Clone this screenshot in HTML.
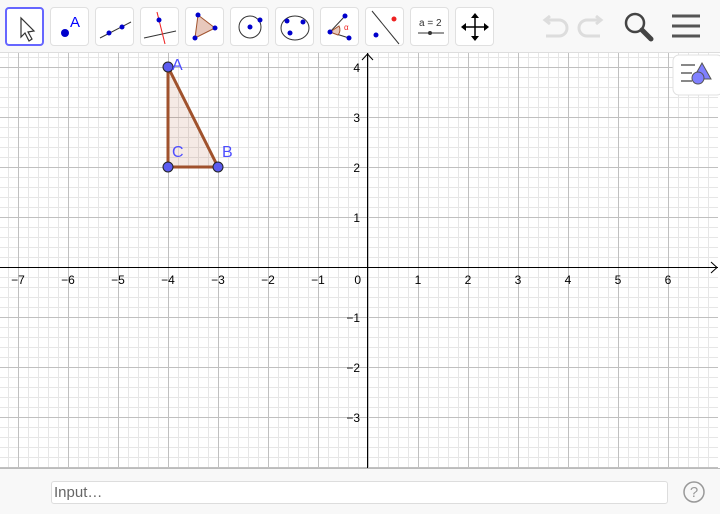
<!DOCTYPE html>
<html><head><meta charset="utf-8"><style>
*{margin:0;padding:0;box-sizing:border-box}
body{width:720px;height:514px;overflow:hidden;background:#fff;font-family:"Liberation Sans",sans-serif;position:relative}
#tb{position:absolute;left:0;top:0;width:720px;height:53px;background:#f8f8f8;border-bottom:1px solid #ddd}
.b{position:absolute;top:7px;width:39px;height:39px;background:#fff;border:1px solid #e0e0e0;border-radius:4px}
.b svg{position:absolute;left:0;top:0}
#g{position:absolute;left:0;top:53px}
#inp{position:absolute;left:0;top:468px;width:720px;height:46px;background:#f8f8f8;border-top:1px solid #bbb}
#box{position:absolute;left:51px;top:12px;width:617px;height:23px;background:#fff;border:1px solid #ddd;border-radius:3px;font-size:15px;color:#666;padding:2px 2px;font-family:"Liberation Sans Narrow","Liberation Sans",sans-serif}
</style></head><body>
<svg id="g" width="720" height="415" viewBox="0 53 720 415">
<defs>
<pattern id="mi" x="8" y="7" width="10" height="10" patternUnits="userSpaceOnUse"><path d="M0.5 0V10M0 0.5H10" stroke="#e6e6e6" stroke-width="1"/></pattern>
<pattern id="ma" x="18" y="17" width="50" height="50" patternUnits="userSpaceOnUse"><path d="M0.5 0V50M0 0.5H50" stroke="#c0c0c0" stroke-width="1"/></pattern>
</defs>
<rect x="0" y="53" width="718" height="415" fill="url(#mi)"/>
<rect x="0" y="53" width="718" height="415" fill="url(#ma)"/>
<line x1="0" y1="267.5" x2="718" y2="267.5" stroke="#000"/>
<line x1="367.5" y1="53" x2="367.5" y2="468" stroke="#000"/>
<path d="M711 262L717 267.5L711 273M362 60L367.5 54L373 60" fill="none" stroke="#000"/>
<g font-size="12" fill="#000" text-anchor="middle">
<text x="18" y="284">−7</text><text x="68" y="284">−6</text><text x="118" y="284">−5</text><text x="168" y="284">−4</text><text x="218" y="284">−3</text><text x="268" y="284">−2</text><text x="318" y="284">−1</text>
<text x="418" y="284">1</text><text x="468" y="284">2</text><text x="518" y="284">3</text><text x="568" y="284">4</text><text x="618" y="284">5</text><text x="668" y="284">6</text>
</g>
<g font-size="12" text-anchor="end">
<text x="361" y="284">0</text>
<text x="360" y="72">4</text><text x="360" y="122">3</text><text x="360" y="172">2</text><text x="360" y="222">1</text>
<text x="360" y="322">−1</text><text x="360" y="372">−2</text><text x="360" y="422">−3</text>
</g>
<polygon points="168,67 218,167 168,167" fill="rgba(153,51,0,0.1)" stroke="#a0522d" stroke-width="3" stroke-linejoin="round"/>
<g fill="#5c5cf0" stroke="#222" stroke-width="1">
<circle cx="168" cy="67" r="5"/><circle cx="218" cy="167" r="5"/><circle cx="168" cy="167" r="5"/>
</g>
<g fill="#4d4dff" font-size="16"><text x="172" y="70">A</text><text x="222" y="157">B</text><text x="172" y="157">C</text></g>
<rect x="673" y="55" width="50" height="40" rx="6" fill="#fff" stroke="#e0e0e0"/>
<path d="M681 65h14M681 73h11M681 81h11" stroke="#888" stroke-width="2"/>
<polygon points="702,63 711,79 693,79" fill="#8080ff" stroke="#555"/>
<circle cx="698" cy="78" r="6" fill="#8080ff" stroke="#555"/>
</svg>
<div id="tb">
<div class="b" style="left:5px;border:2px solid #6666ff"><svg width="38" height="38"><path d="M14 9L14 28L18 24L22 32L25 30L21 23L27 22Z" fill="#fff" stroke="#333" stroke-width="1.2"/></svg></div>
<div class="b" style="left:50px"><svg width="40" height="40"><circle cx="14" cy="25" r="4" fill="#00c"/><text x="19" y="19" font-size="15" fill="#00f">A</text></svg></div>
<div class="b" style="left:95px"><svg width="40" height="40"><line x1="4" y1="30" x2="35" y2="14" stroke="#333"/><circle cx="13" cy="25" r="2.5" fill="#00c"/><circle cx="26" cy="19" r="2.5" fill="#00c"/></svg></div>
<div class="b" style="left:140px"><svg width="40" height="40"><line x1="3" y1="30" x2="35" y2="23" stroke="#333"/><line x1="16" y1="4" x2="24" y2="36" stroke="#e22"/><circle cx="18" cy="12" r="2.5" fill="#00c"/></svg></div>
<div class="b" style="left:185px"><svg width="40" height="40"><polygon points="12,7 29,20 9,30" fill="#e8c8bc" stroke="#a0522d"/><circle cx="12" cy="7" r="2.5" fill="#00c"/><circle cx="29" cy="20" r="2.5" fill="#00c"/><circle cx="9" cy="30" r="2.5" fill="#00c"/></svg></div>
<div class="b" style="left:230px"><svg width="40" height="40"><circle cx="19" cy="19" r="11" fill="none" stroke="#333"/><circle cx="19" cy="19" r="2.5" fill="#00c"/><circle cx="29" cy="12" r="2.5" fill="#00c"/></svg></div>
<div class="b" style="left:275px"><svg width="40" height="40"><ellipse cx="19" cy="20" rx="14" ry="12" fill="none" stroke="#333"/><circle cx="11" cy="13" r="2.5" fill="#00c"/><circle cx="27" cy="14" r="2.5" fill="#00c"/><circle cx="14" cy="25" r="2.5" fill="#00c"/></svg></div>
<div class="b" style="left:320px"><svg width="40" height="40"><path d="M24 8L9 24L28 30" fill="none" stroke="#333"/><path d="M9 24L18 18A8 8 0 0 1 17 27Z" fill="#e8c8bc" stroke="#a0522d"/><text x="23" y="22" font-size="8" fill="#e22">α</text><circle cx="24" cy="8" r="2.5" fill="#00c"/><circle cx="9" cy="24" r="2.5" fill="#00c"/><circle cx="28" cy="30" r="2.5" fill="#00c"/></svg></div>
<div class="b" style="left:365px"><svg width="40" height="40"><line x1="6" y1="3" x2="33" y2="36" stroke="#333"/><circle cx="28" cy="11" r="2.5" fill="#e22"/><circle cx="10" cy="27" r="2.5" fill="#00c"/></svg></div>
<div class="b" style="left:410px"><svg width="40" height="40"><text x="8" y="18" font-size="10" fill="#333">a = 2</text><line x1="7" y1="25" x2="33" y2="25" stroke="#333"/><circle cx="19" cy="25" r="2" fill="#333"/></svg></div>
<div class="b" style="left:455px"><svg width="40" height="40"><path d="M19 8V30M8 19H30" stroke="#000" stroke-width="1.5"/><path d="M19 5l-4 5h8zM19 33l-4-5h8zM5 19l5-4v8zM33 19l-5-4v8z" fill="#000"/></svg></div>
<svg style="position:absolute;left:538px;top:12px" width="70" height="30"><path d="M8 8H21A8 8 0 0 1 21 24H8M12 4L7 8L12 12M62 8H49A8 8 0 0 0 49 24H62M58 4L63 8L58 12" fill="none" stroke="#ddd" stroke-width="3"/></svg>
<svg style="position:absolute;left:622px;top:10px" width="36" height="34"><circle cx="13" cy="13" r="9" fill="none" stroke="#444" stroke-width="2.5"/><line x1="20" y1="20" x2="29" y2="29" stroke="#444" stroke-width="5" stroke-linecap="round"/></svg>
<svg style="position:absolute;left:670px;top:12px" width="32" height="30"><path d="M2 4H30M2 14H30M2 24H30" stroke="#555" stroke-width="3"/></svg>
</div>
<div id="inp"><div id="box">Input…</div>
<svg style="position:absolute;left:682px;top:11px" width="24" height="24"><circle cx="12" cy="12" r="10" fill="none" stroke="#999" stroke-width="1.5"/><text x="12" y="17" font-size="15" text-anchor="middle" fill="#999">?</text></svg></div>
</body></html>
